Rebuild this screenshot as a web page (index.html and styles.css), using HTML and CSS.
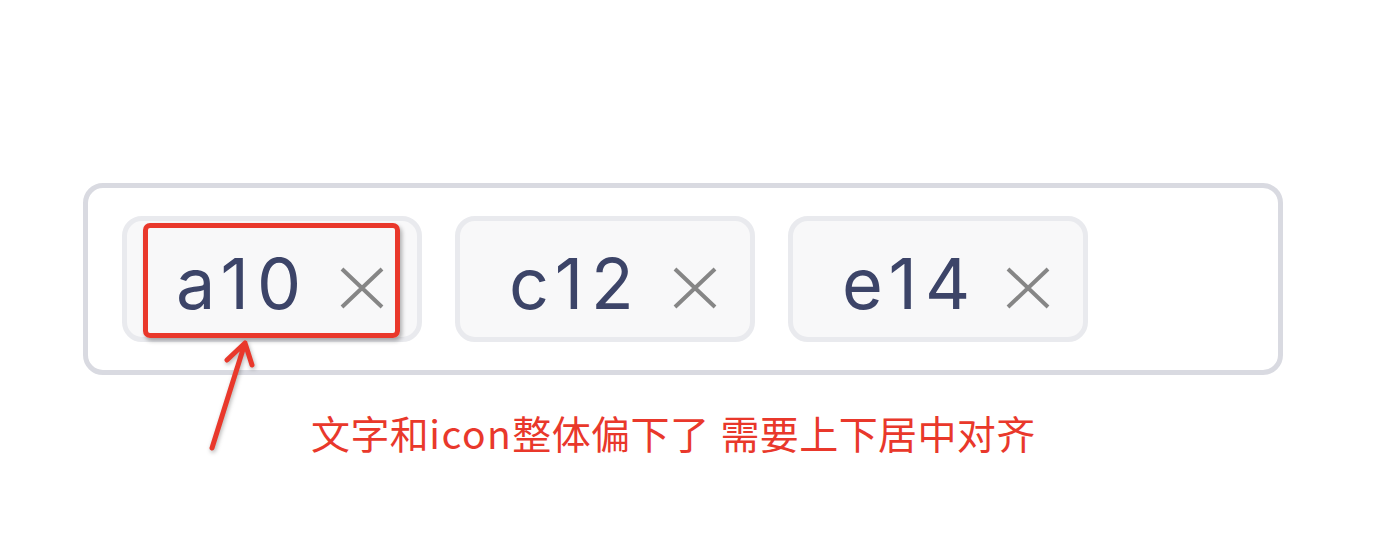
FILE: index.html
```html
<!DOCTYPE html>
<html lang="zh-CN">

<head>
    <meta charset="utf-8">
    <title>Tag input</title>
    <link rel="stylesheet" href="styles.css">
</head>

<body>
    <div class="page">
        <div class="tag-input">
            <div class="tag">
                <span class="tag-label">a10</span>
                <svg class="tag-close" viewBox="0 0 44 42" width="44" height="42">
                    <path d="M2 2 L42 40 M42 2 L2 40" />
                </svg>
            </div>
            <div class="tag">
                <span class="tag-label">c12</span>
                <svg class="tag-close" viewBox="0 0 44 42" width="44" height="42">
                    <path d="M2 2 L42 40 M42 2 L2 40" />
                </svg>
            </div>
            <div class="tag">
                <span class="tag-label">e14</span>
                <svg class="tag-close" viewBox="0 0 44 42" width="44" height="42">
                    <path d="M2 2 L42 40 M42 2 L2 40" />
                </svg>
            </div>
        </div>

        <!-- review annotation -->
        <div class="note-box"></div>
        <svg class="note-arrow" viewBox="0 0 60 120" width="60" height="120">
            <path d="M12 113 L45 8 M27 25 L45 8 L52 30" />
        </svg>
        <div class="note-text">文字和<span class="latin">icon</span>整体偏下了 需要上下居中对齐</div>
    </div>
</body>

</html>
```

FILE: styles.css
```css
body {
    margin: 0;
    background: #fff;
    font-family: Inter, "Noto Sans", sans-serif;
}

.page {
    position: relative;
    width: 1388px;
    height: 552px;
    padding: 183px 0 0 83px;
    box-sizing: border-box;
}

.tag-input {
    width: 1200px;
    height: 192px;
    box-sizing: border-box;
    border: 5px solid #d9dae1;
    border-radius: 20px;
    padding: 28px 34px;
    display: flex;
    gap: 33px;
}

.tag {
    width: 300px;
    height: 126px;
    box-sizing: border-box;
    border: 5px solid #e9eaee;
    border-radius: 20px;
    background: #f8f8f9;
    padding: 28px 33px 0 49px;
    display: flex;
    align-items: baseline;
    justify-content: space-between;
}

.tag-label {
    font-size: 70px;
    line-height: 1;
    letter-spacing: 8px;
    color: #3c4468;
}

.tag-close {
    flex: none;

    & path {
        stroke: #868686;
        stroke-width: 4;
        fill: none;
    }
}

.note-box {
    position: absolute;
    left: 143px;
    top: 223px;
    width: 257px;
    height: 115px;
    box-sizing: border-box;
    border: 5px solid #e9382b;
    border-radius: 7px;
    box-shadow: 2px 3px 4px rgba(0, 0, 0, 0.3);
}

.note-arrow {
    position: absolute;
    left: 200px;
    top: 335px;
    filter: drop-shadow(1px 2px 2px rgba(0, 0, 0, 0.3));

    & path {
        stroke: #e9382b;
        stroke-width: 5;
        stroke-linecap: round;
        stroke-linejoin: round;
        fill: none;
    }
}

.note-text {
    position: absolute;
    left: 311px;
    top: 413px;
    font-family: "Noto Sans CJK SC", sans-serif;
    font-size: 39px;
    line-height: 1;
    letter-spacing: 0.4px;
    word-spacing: 2px;
    color: #e9382b;
    white-space: nowrap;

    & .latin {
        letter-spacing: 1.5px;
    }
}
```
